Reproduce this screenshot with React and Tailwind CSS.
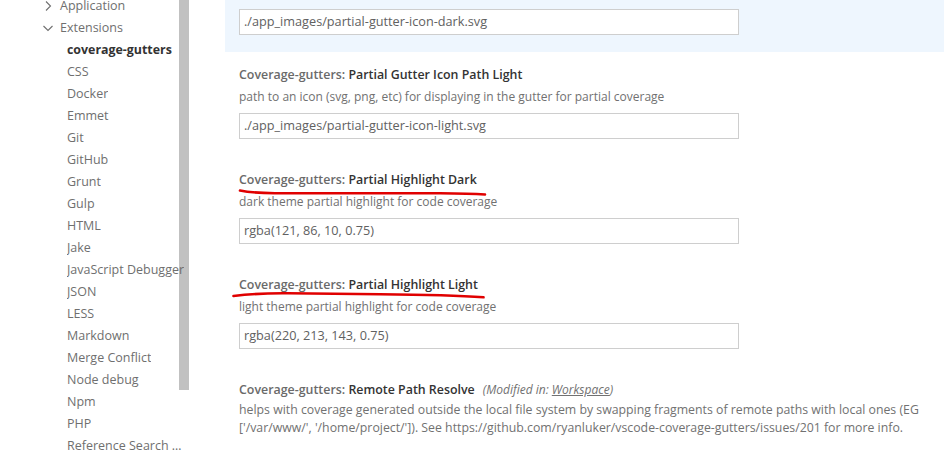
import React from 'react';

const FONT = { fontFamily: '"Open Sans", "Noto Sans", sans-serif' };

const tocItems = [
  'CSS',
  'Docker',
  'Emmet',
  'Git',
  'GitHub',
  'Grunt',
  'Gulp',
  'HTML',
  'Jake',
  'JavaScript Debugger',
  'JSON',
  'LESS',
  'Markdown',
  'Merge Conflict',
  'Node debug',
  'Npm',
  'PHP',
  'Reference Search View',
];

const settings = [
  {
    name: 'Partial Gutter Icon Path Light',
    desc: 'path to an icon (svg, png, etc) for displaying in the gutter for partial coverage',
    value: './app_images/partial-gutter-icon-light.svg',
  },
  {
    name: 'Partial Highlight Dark',
    desc: 'dark theme partial highlight for code coverage',
    value: 'rgba(121, 86, 10, 0.75)',
  },
  {
    name: 'Partial Highlight Light',
    desc: 'light theme partial highlight for code coverage',
    value: 'rgba(220, 213, 143, 0.75)',
  },
];

function Chevron({ open }) {
  return (
    <svg width="16" height="16" viewBox="0 0 16 16" className="shrink-0">
      {open ? (
        <path d="M3.5 6 L8 10.5 L12.5 6" fill="none" stroke="#6f6f6f" strokeWidth="1.1" />
      ) : (
        <path d="M6 3.5 L10.5 8 L6 12.5" fill="none" stroke="#6f6f6f" strokeWidth="1.1" />
      )}
    </svg>
  );
}

function Sidebar() {
  return (
    <div className="relative w-[190px] shrink-0 h-[450px] overflow-hidden">
      <div className="mt-[-5px] text-[12.5px] text-[#6f6f6f]">
        <div className="h-[22px] flex items-center pl-[40px] gap-[4px]">
          <Chevron />
          <span>Application</span>
        </div>
        <div className="h-[22px] flex items-center pl-[40px] gap-[4px]">
          <Chevron open />
          <span>Extensions</span>
        </div>
        <div className="h-[22px] flex items-center pl-[67px] font-bold text-[12.4px] text-[#333333]">
          coverage-gutters
        </div>
        {tocItems.map((item) => (
          <div key={item} className="h-[22px] flex items-center pl-[67px] whitespace-nowrap">
            <span className="block max-w-[121px] overflow-hidden text-ellipsis">{item}</span>
          </div>
        ))}
      </div>
      {/* overlay scrollbar, see-through like the real one */}
      <div className="absolute left-[179px] top-0 w-[10px] h-[390px] bg-[rgba(100,100,100,0.4)]" />
    </div>
  );
}

function ValueBox({ value }) {
  return (
    <div className="w-[500px] h-[26px] border border-[#cecece] bg-white flex items-center px-[4px] text-[12.7px] text-[#616161]">
      {value}
    </div>
  );
}

function Setting({ item }) {
  return (
    <div className="pl-[14px] pt-[12px] pb-[18px]">
      <div className="h-[22px] flex items-center text-[12.4px] font-semibold">
        <span className="text-[#6a6a6a]">Coverage-gutters:&nbsp;</span>
        <span className="text-[#333333]">{item.name}</span>
      </div>
      <div className="h-[22px] flex items-center text-[12px] text-[#717171]">{item.desc}</div>
      <div className="mt-[5px]">
        <ValueBox value={item.value} />
      </div>
    </div>
  );
}

export default function App() {
  return (
    <div className="relative w-[944px] h-[450px] overflow-hidden bg-white flex" style={FONT}>
      <Sidebar />
      <div className="ml-[35px] flex-1">
        <div className="bg-[#eef6fe] pl-[14px] pt-[9px] pb-[17px]">
          <ValueBox value="./app_images/partial-gutter-icon-dark.svg" />
        </div>
        {settings.map((s) => (
          <Setting key={s.name} item={s} />
        ))}
        <div className="pl-[14px] pt-[12px]">
          <div className="h-[22px] flex items-center text-[12.4px]">
            <span className="font-semibold text-[#6a6a6a]">Coverage-gutters:&nbsp;</span>
            <span className="font-semibold text-[#333333]">Remote Path Resolve</span>
            <span className="ml-[8px] italic text-[12px] text-[#717171]">
              (Modified in: <span className="underline">Workspace</span>)
            </span>
          </div>
          <div className="text-[12.3px] leading-[18px] text-[#717171] pr-[14px]">
            helps with coverage generated outside the local file system by swapping fragments of remote paths with local ones (EG
            ['/var/www/', '/home/project/']). See https://github.com/ryanluker/vscode-coverage-gutters/issues/201 for more info.
          </div>
        </div>
      </div>
      <svg className="absolute left-0 top-0 pointer-events-none" width="944" height="450">
        <path
          d="M240 190.5 Q 252 193 275 193.3 L 440 193.3 Q 470 193.5 485 194.5"
          fill="none"
          stroke="#e00000"
          strokeWidth="2.6"
          strokeLinecap="round"
        />
        <path
          d="M233.5 296 Q 258 293 288 293.3 L 380 294.3 Q 450 295 483.5 297.3"
          fill="none"
          stroke="#e00000"
          strokeWidth="2.6"
          strokeLinecap="round"
        />
      </svg>
    </div>
  );
}
